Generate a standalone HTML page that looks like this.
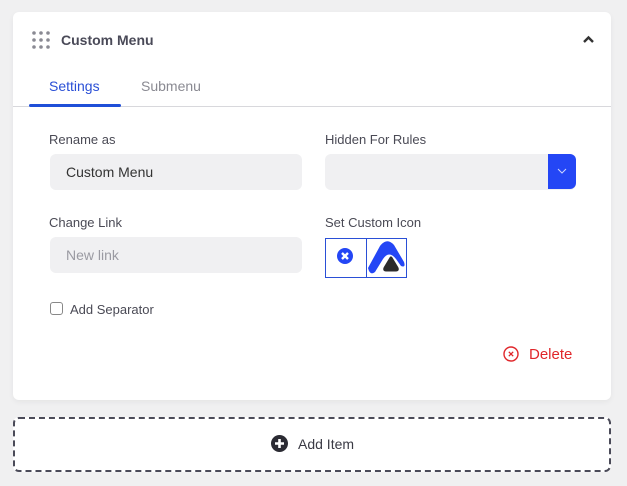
<!DOCTYPE html>
<html><head><style>
body{margin:0;width:627px;height:486px;background:#f0f0f1;font-family:"Liberation Sans",sans-serif;position:relative;overflow:hidden}
.a{position:absolute}
.card{left:13px;top:12px;width:598px;height:388px;background:#fff;border-radius:6px;box-shadow:0 2px 6px rgba(0,0,0,.05)}
.lbl{font-size:13px;color:#4a4a55}
.inp{background:#f0f0f2;border-radius:6px;height:36px;font-size:14px;line-height:36px;padding-left:16px;box-sizing:border-box}
</style></head><body>
<div class="a card"></div>
<svg class="a" style="left:31px;top:31px" width="20" height="18">
<g fill="#8a8a93"><circle cx="3" cy="2" r="1.8"/><circle cx="10" cy="2" r="1.8"/><circle cx="17" cy="2" r="1.8"/><circle cx="3" cy="9" r="1.8"/><circle cx="10" cy="9" r="1.8"/><circle cx="17" cy="9" r="1.8"/><circle cx="3" cy="16" r="1.8"/><circle cx="10" cy="16" r="1.8"/><circle cx="17" cy="16" r="1.8"/></g></svg>
<div class="a" style="left:61px;top:32px;font-size:14px;font-weight:bold;color:#4a4a58">Custom Menu</div>
<svg class="a" style="left:582px;top:35px" width="13" height="9"><path d="M2 7L6.5 2.5L11 7" stroke="#333" stroke-width="2.4" fill="none"/></svg>
<div class="a" style="left:49px;top:78px;font-size:14px;color:#2a4fd6">Settings</div>
<div class="a" style="left:141px;top:78px;font-size:14px;color:#8a8a92">Submenu</div>
<div class="a" style="left:13px;top:106px;width:598px;height:1px;background:#d8d8dc"></div>
<div class="a" style="left:29px;top:104px;width:92px;height:3px;background:#1f4fd8;border-radius:2px"></div>
<div class="a lbl" style="left:49px;top:132px">Rename as</div>
<div class="a inp" style="left:50px;top:154px;width:252px;color:#333">Custom Menu</div>
<div class="a lbl" style="left:325px;top:132px">Hidden For Rules</div>
<div class="a inp" style="left:325px;top:154px;width:251px"></div>
<div class="a" style="left:548px;top:154px;width:28px;height:35px;background:#2446f5;border-radius:0 6px 6px 0"></div>
<svg class="a" style="left:557px;top:168px" width="10" height="6"><path d="M1 1L5 5L9 1" stroke="#cfd6ff" stroke-width="1" fill="none"/></svg>
<div class="a lbl" style="left:49px;top:215px">Change Link</div>
<div class="a inp" style="left:50px;top:237px;width:252px;color:#9a9aa2">New link</div>
<div class="a lbl" style="left:325px;top:215px">Set Custom Icon</div>
<div class="a" style="left:325px;top:238px;width:80px;height:38px;border:1px solid #2a4fd6;box-sizing:content-box"></div>
<div class="a" style="left:366px;top:238px;width:1px;height:40px;background:#2a4fd6"></div>
<svg class="a" style="left:337px;top:248px" width="16" height="16"><circle cx="8" cy="8" r="8" fill="#2446f5"/><path d="M5 5L11 11M11 5L5 11" stroke="#fff" stroke-width="2.4"/></svg>
<svg class="a" style="left:366px;top:238px" width="42" height="40"><path d="M2 30L14 8Q21 -1 28 7L38 24Q40 30 35 28L30 21Q23 12 17 21L9 34Q4 38 2 30Z" fill="#2446f5"/><path d="M25 20L31 30Q32 32 30 32H20Q18 32 19 30Z" fill="#2b2b2b" stroke="#2b2b2b" stroke-width="3" stroke-linejoin="round"/></svg>
<div class="a" style="left:50px;top:302px;width:11px;height:11px;border:1px solid #888;border-radius:3px"></div>
<div class="a lbl" style="left:70px;top:302px">Add Separator</div>
<svg class="a" style="left:503px;top:346px" width="16" height="16"><circle cx="8" cy="8" r="7" stroke="#e0262a" stroke-width="1.4" fill="none"/><path d="M5.8 5.8L10.2 10.2M10.2 5.8L5.8 10.2" stroke="#e0262a" stroke-width="1.3"/></svg>
<div class="a" style="left:529px;top:346px;font-size:15px;color:#e0262a">Delete</div>
<div class="a" style="left:13px;top:417px;width:598px;height:55px;border:2px dashed #4a4a58;border-radius:6px;box-sizing:border-box;background:#fff"></div>
<svg class="a" style="left:271px;top:435px" width="17" height="17"><circle cx="8.5" cy="8.5" r="8.5" fill="#2b2b33"/><path d="M8.5 4V13M4 8.5H13" stroke="#fff" stroke-width="2.6"/></svg>
<div class="a" style="left:298px;top:436px;font-size:14px;color:#3a3a44">Add Item</div>
</body></html>
